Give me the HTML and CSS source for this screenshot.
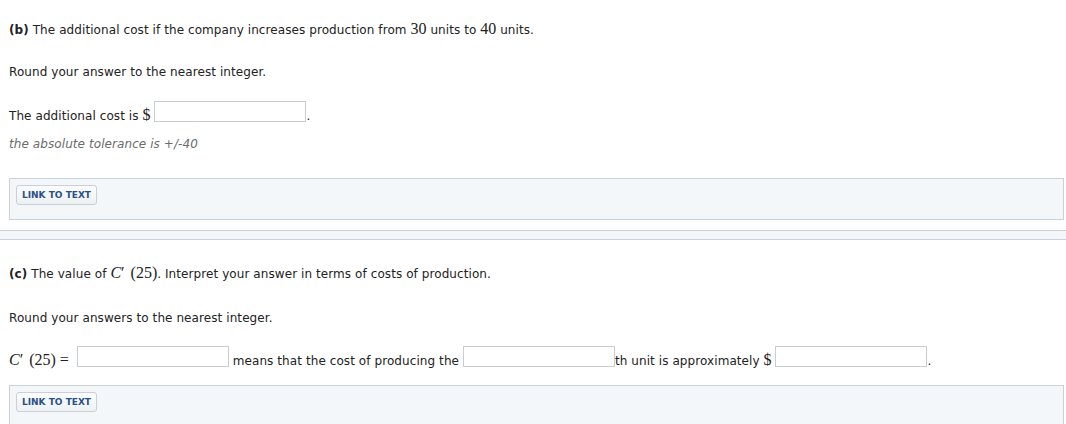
FILE: index.html
```html
<!DOCTYPE html>
<html>
<head>
<meta charset="utf-8">
<link rel="stylesheet" href="styles.css">
</head>
<body>
<div class="part">
  <p class="q"><b>(b)</b> The additional cost if the company increases production from <span class="m">30</span> units to <span class="m">40</span> units.</p>
  <p class="round">Round your answer to the nearest integer.</p>
  <p class="ans">The additional cost is <span class="m">$</span> <span class="inp"></span>.</p>
  <p class="tol">the absolute tolerance is +/-40</p>
  <div class="linkbox"><span class="btn">LINK TO TEXT</span></div>
</div>
<div class="sep"></div>
<div class="part">
  <p class="q q2"><b>(c)</b> The value of <span class="m"><i>C</i>&#8242;<span class="arg">(25)</span></span>. Interpret your answer in terms of costs of production.</p>
  <p class="round round2">Round your answers to the nearest integer.</p>
  <p class="ans ans2"><span class="m"><i>C</i>&#8242;<span class="arg">(25)</span><span class="eq">=</span></span><span class="inp"></span> means that the cost of producing the <span class="inp"></span>th unit is approximately <span class="m">$</span> <span class="inp"></span>.</p>
  <div class="linkbox lb2"><span class="btn">LINK TO TEXT</span></div>
</div>
</body>
</html>
```
FILE: styles.css
```css
html, body {
  margin: 0;
  padding: 0;
  background: #ffffff;
}
body {
  font-family: "DejaVu Sans", Verdana, sans-serif;
  font-size: 12px;
  letter-spacing: 0.08px;
  color: #222222;
  width: 1066px;
  height: 424px;
  overflow: hidden;
}
.part {
  padding: 0 2px 0 9px;
}
p {
  margin: 0;
}
.m {
  font-family: "Liberation Serif", "Times New Roman", serif;
  font-size: 16px;
  letter-spacing: 0;
}
.arg {
  margin-left: 6px;
}
.eq {
  margin: 0 8px 0 4px;
}
.q {
  padding-top: 21px;
  line-height: 16px;
}
.round {
  margin-top: 26px;
  line-height: 16px;
}
.ans {
  margin-top: 21px;
  line-height: 16px;
}
.inp {
  display: inline-block;
  width: 152px;
  height: 21px;
  vertical-align: -2px;
  border: 1px solid #c9cdd2;
  background: #fff;
  box-sizing: border-box;
}
.tol {
  margin-top: 12px;
  font-style: italic;
  color: #6b6b6b;
  line-height: 16px;
}
.linkbox {
  margin-top: 26px;
  height: 42px;
  box-sizing: border-box;
  border: 1px solid #c8d1de;
  background: #f4f7fa;
  padding: 6px 0 0 6px;
}
.btn {
  display: inline-block;
  font-size: 9px;
  font-weight: bold;
  color: #2a5087;
  border: 1px solid #c9d0d8;
  border-radius: 3px;
  background: linear-gradient(#fbfcfd, #eef1f4);
  padding: 4px 5px 3px;
  line-height: 11px;
  letter-spacing: 0;
}
.sep {
  margin-top: 10px;
  height: 8px;
  border-top: 1px solid #c8d1de;
  border-bottom: 1px solid #c8d1de;
  background: #f4f7fa;
}
.q2 {
  padding-top: 25px;
}
.round2 {
  margin-top: 28px;
}
.ans2 {
  margin-top: 20px;
}
.lb2 {
  margin-top: 16px;
}
```
